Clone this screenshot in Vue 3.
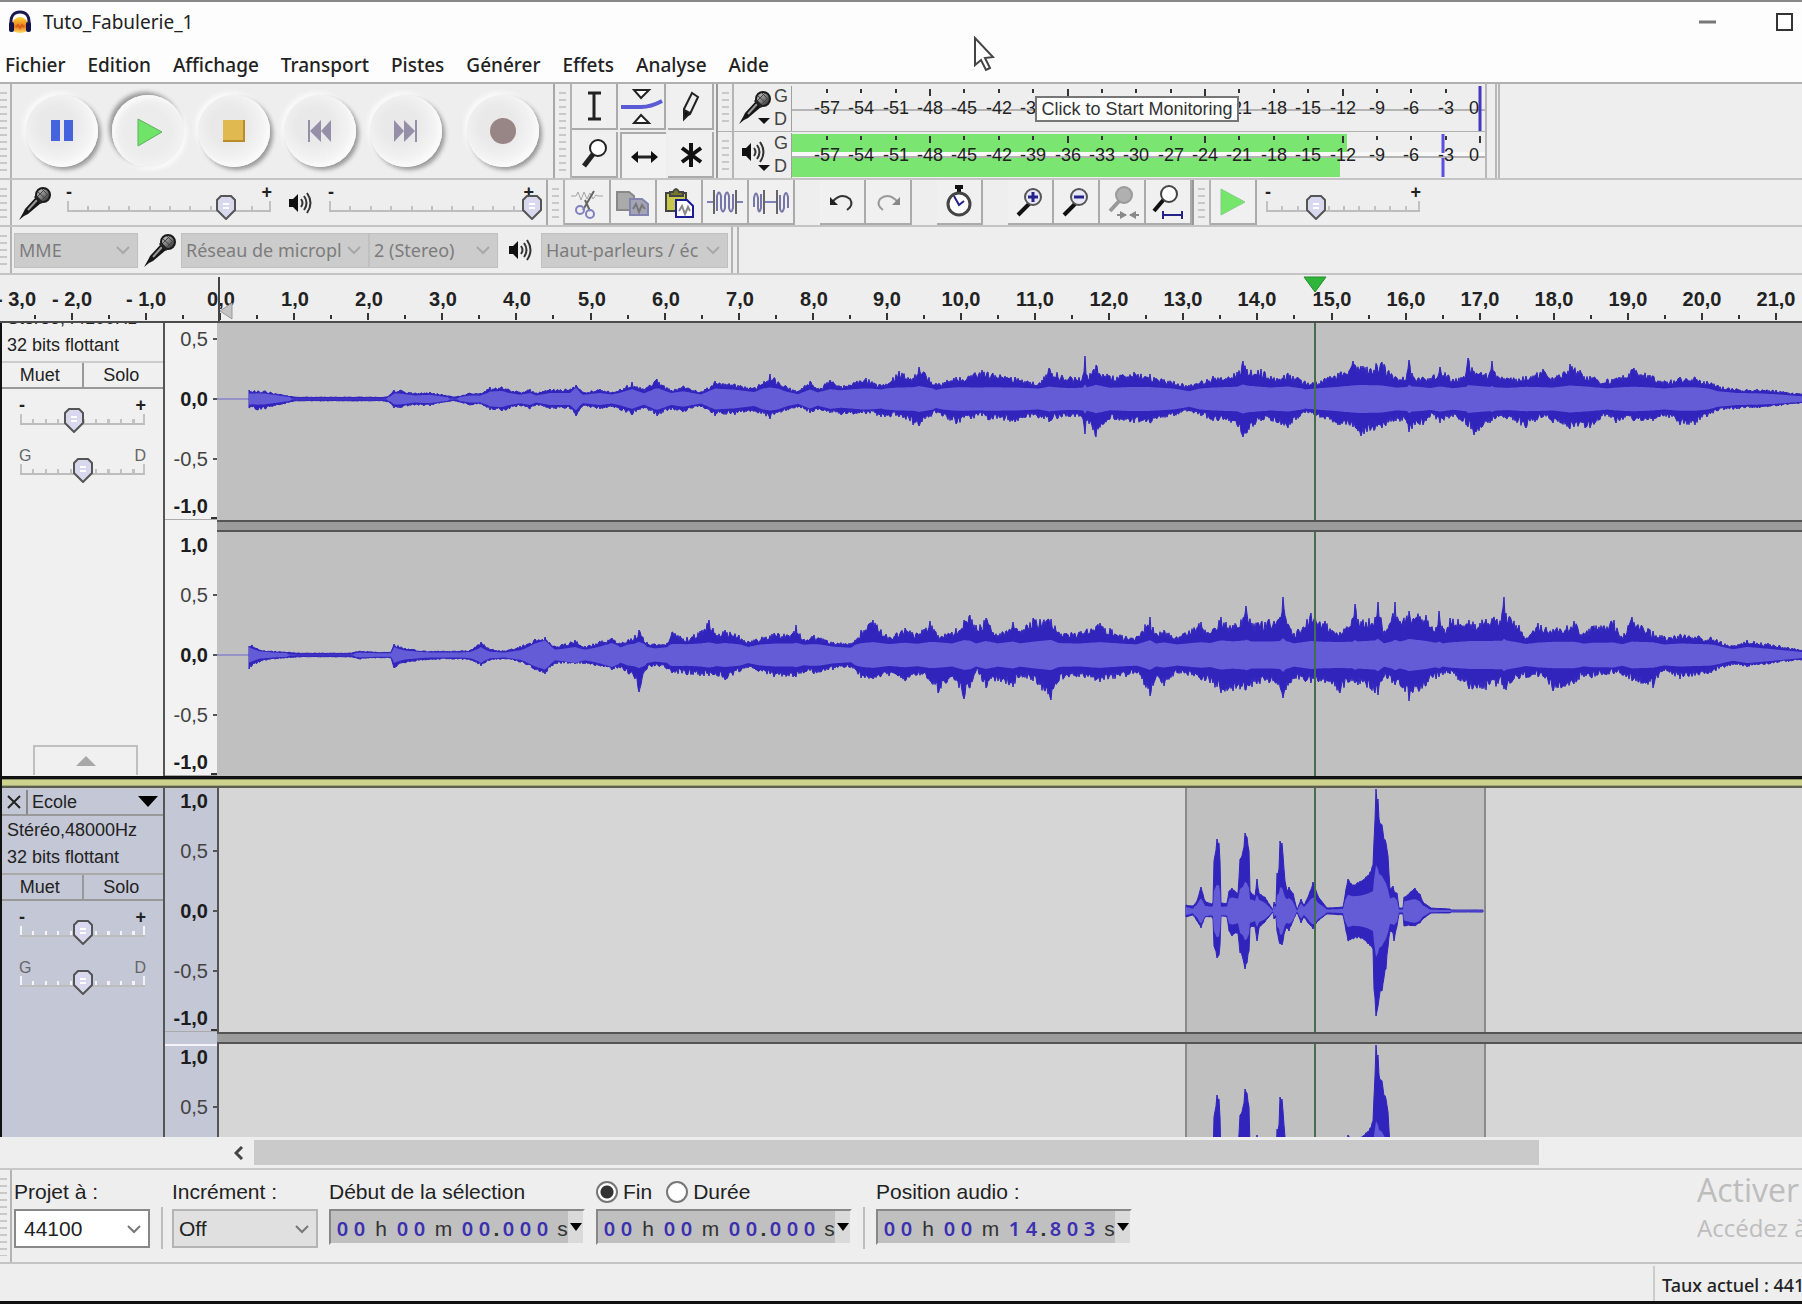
<script setup>
import { ref } from 'vue'

const menus = ['Fichier', 'Edition', 'Affichage', 'Transport', 'Pistes', 'Générer', 'Effets', 'Analyse', 'Aide']

const transport = [
  { id: 'pause', label: 'Pause' },
  { id: 'play', label: 'Lecture', pressed: true },
  { id: 'stop', label: 'Arrêt' },
  { id: 'start', label: 'Début' },
  { id: 'end', label: 'Fin' },
  { id: 'record', label: 'Enregistrer' },
]

const tools = [
  { id: 'select', label: 'Sélection' },
  { id: 'envelope', label: 'Enveloppe' },
  { id: 'draw', label: 'Retouche' },
  { id: 'zoom', label: 'Zoom' },
  { id: 'shift', label: 'Glissement temporel', pressed: true },
  { id: 'multi', label: 'Multi-outils' },
]

const editGroups = [
  [
    { id: 'cut', label: 'Couper' },
    { id: 'copy', label: 'Copier' },
    { id: 'paste', label: 'Coller' },
    { id: 'trim', label: 'Rogner' },
    { id: 'silence', label: 'Silence' },
  ],
  [
    { id: 'undo', label: 'Annuler' },
    { id: 'redo', label: 'Rétablir' },
  ],
  [{ id: 'clock', label: 'Sync-Lock' }],
  [
    { id: 'zoomin', label: 'Zoom avant' },
    { id: 'zoomout', label: 'Zoom arrière' },
    { id: 'fitsel', label: 'Ajuster la sélection' },
    { id: 'fitproj', label: 'Ajuster le projet' },
  ],
]

// Level meters: one mark every 3 dB
const marks = Array.from({ length: 20 }, (_, i) => {
  const db = -57 + i * 3
  return { db, x: Math.round(36 + (i * 653) / 19), major: db % 12 === 0 }
})

// Time ruler: as many seconds as the window can show
const PX_PER_SEC = 74.1
const ORIGIN = 220
const lastSecond = Math.floor((window.innerWidth - ORIGIN) / PX_PER_SEC)
const at = (s) => Math.round(ORIGIN + s * PX_PER_SEC)
const ticks = []
for (let s = -2.5; s <= lastSecond; s += 0.5) {
  ticks.push({ x: at(s), major: Number.isInteger(s) })
}
const rulerLabels = []
for (let s = -2; s <= lastSecond; s++) {
  rulerLabels.push({ x: at(s) + (s >= 0 && s < 9 ? 1 : 0), text: (s < 0 ? '- ' : '') + Math.abs(s) + ',0' })
}

// Peak envelopes as [x, up, down] triples
const envA = [
  249, 9, 9, 258, 8, 11, 265, 8, 10, 280, 5, 6, 295, 2, 2, 385, 2, 2, 390, 4, 4, 394, 9, 9, 400, 9, 9, 415, 6, 6, 430, 7, 7, 445, 4, 3, 455, 2, 2,
  470, 6, 6, 480, 6, 5, 490, 12, 11, 502, 12, 12, 520, 7, 7, 530, 10, 10, 536, 6, 6, 550, 10, 10, 570, 10, 10, 576, 14, 17, 583, 7, 7,
  600, 10, 10, 612, 7, 8, 620, 10, 11, 632, 17, 16, 644, 10, 9, 657, 20, 17, 671, 9, 11, 683, 13, 13, 701, 7, 8, 715, 18, 17,
  735, 15, 16, 754, 11, 12, 770, 25, 20, 786, 13, 12, 798, 8, 8, 810, 18, 14, 818, 11, 11, 830, 19, 14, 841, 13, 16, 866, 21, 15,
  881, 14, 18, 899, 28, 18, 913, 21, 26, 919, 32, 27, 936, 16, 14, 956, 22, 25, 982, 29, 17, 988, 27, 21, 1015, 22, 23,
  1039, 16, 19, 1049, 31, 23, 1062, 24, 18, 1075, 22, 18, 1083, 24, 20, 1085, 43, 35, 1087, 24, 22, 1096, 34, 38, 1110, 23, 20,
  1134, 27, 24, 1150, 25, 24, 1174, 18, 17, 1189, 14, 12, 1213, 23, 22, 1237, 27, 26, 1243, 38, 38, 1247, 30, 34, 1261, 30, 22,
  1271, 23, 22, 1288, 26, 29, 1305, 18, 14, 1315, 18, 17, 1338, 26, 26, 1353, 38, 28, 1361, 33, 37, 1382, 37, 29, 1396, 22, 22,
  1407, 26, 24, 1409, 39, 33, 1412, 26, 30, 1423, 22, 26, 1430, 21, 18, 1440, 32, 24, 1453, 20, 18, 1466, 26, 26, 1468, 41, 28,
  1474, 28, 36, 1490, 27, 24, 1492, 38, 22, 1495, 27, 20, 1507, 21, 20, 1526, 23, 29, 1543, 30, 18, 1553, 21, 24, 1570, 35, 30,
  1590, 23, 29, 1607, 20, 16, 1616, 21, 24, 1634, 31, 22, 1653, 23, 22, 1664, 18, 17, 1680, 22, 26, 1695, 22, 26, 1707, 18, 18,
  1718, 14, 12, 1737, 10, 10, 1757, 10, 9, 1776, 9, 7, 1802, 5, 4, 1960, 2, 2,
]
const envB = [
  249, 9, 14, 252, 10, 11, 260, 5, 7, 275, 4, 4, 299, 2, 2, 350, 2, 2, 360, 4, 4, 375, 3, 3, 391, 3, 3, 394, 11, 13, 405, 7, 8,
  425, 4, 5, 455, 4, 4, 470, 5, 5, 481, 13, 11, 490, 6, 5, 505, 4, 4, 520, 9, 7, 535, 16, 15, 545, 18, 19, 555, 9, 9, 575, 15, 9,
  585, 9, 9, 600, 14, 11, 612, 17, 15, 620, 12, 13, 635, 20, 24, 639, 25, 37, 647, 13, 14, 655, 11, 11, 667, 12, 14, 672, 23, 18,
  687, 18, 20, 700, 24, 21, 709, 35, 21, 717, 20, 21, 725, 25, 25, 739, 20, 17, 748, 14, 13, 774, 22, 22, 793, 22, 22, 796, 30, 22,
  804, 16, 18, 814, 20, 19, 833, 13, 15, 851, 12, 12, 861, 25, 23, 873, 35, 24, 889, 18, 21, 905, 27, 26, 917, 22, 20, 930, 34, 26,
  938, 20, 38, 952, 23, 22, 964, 35, 44, 970, 40, 33, 976, 30, 16, 986, 37, 33, 998, 20, 26, 1013, 33, 32, 1020, 24, 22,
  1033, 37, 26, 1051, 36, 45, 1059, 23, 26, 1079, 23, 22, 1100, 32, 27, 1126, 19, 22, 1137, 19, 18, 1150, 38, 41, 1156, 22, 22,
  1164, 25, 31, 1177, 18, 18, 1201, 33, 25, 1210, 22, 28, 1221, 38, 38, 1233, 30, 36, 1245, 41, 35, 1246, 49, 35, 1252, 32, 32,
  1269, 36, 28, 1280, 38, 32, 1283, 58, 43, 1286, 36, 35, 1294, 22, 24, 1311, 42, 28, 1325, 34, 28, 1340, 23, 38, 1352, 36, 26,
  1355, 51, 28, 1358, 36, 30, 1375, 38, 38, 1378, 53, 40, 1384, 24, 22, 1392, 38, 28, 1395, 53, 30, 1400, 34, 30, 1409, 44, 46,
  1426, 40, 31, 1436, 28, 24, 1439, 44, 22, 1443, 26, 20, 1450, 37, 19, 1469, 35, 34, 1486, 36, 35, 1502, 42, 30, 1504, 58, 34,
  1506, 42, 35, 1519, 30, 24, 1526, 17, 23, 1538, 32, 22, 1553, 26, 36, 1574, 34, 29, 1584, 22, 22, 1592, 29, 23, 1614, 35, 19,
  1622, 18, 20, 1632, 38, 26, 1653, 24, 33, 1664, 19, 16, 1680, 21, 24, 1711, 18, 18, 1733, 9, 10, 1747, 15, 12, 1768, 12, 9,
  1802, 5, 5, 1960, 2, 2,
]
const envC = [
  1186, 6, 6, 1193, 5, 4, 1197, 10, 10, 1201, 24, 17, 1205, 10, 6, 1212, 7, 6, 1213, 9, 8, 1214, 50, 35, 1217, 72, 47, 1219, 68, 44,
  1220, 50, 34, 1221, 8, 5, 1227, 8, 6, 1229, 20, 20, 1232, 23, 25, 1238, 18, 22, 1240, 52, 42, 1243, 60, 48, 1245, 78, 58,
  1247, 74, 52, 1249, 60, 40, 1250, 20, 17, 1255, 15, 16, 1257, 32, 30, 1259, 18, 17, 1265, 14, 11, 1273, 1, 1, 1274, 9, 8,
  1276, 6, 6, 1277, 38, 20, 1279, 42, 30, 1280, 70, 33, 1282, 68, 34, 1283, 56, 30, 1285, 30, 20, 1287, 20, 17, 1289, 24, 20,
  1293, 18, 10, 1297, 1, 1, 1301, 12, 12, 1304, 6, 6, 1308, 14, 12, 1313, 29, 18, 1318, 15, 10, 1327, 3, 3, 1343, 4, 4,
  1346, 22, 20, 1348, 32, 30, 1353, 26, 28, 1360, 30, 27, 1368, 36, 33, 1373, 46, 38, 1374, 70, 78, 1376, 122, 105, 1378, 112, 95,
  1379, 92, 88, 1382, 86, 80, 1386, 68, 58, 1388, 55, 36, 1390, 22, 20, 1393, 25, 22, 1394, 20, 30, 1397, 18, 15, 1399, 3, 3,
  1403, 3, 3, 1404, 14, 15, 1415, 23, 15, 1420, 17, 12, 1423, 9, 8, 1431, 3, 2, 1450, 2, 2, 1451, 1, 1, 1484, 1, 1,
]

const LEFT = 217

function trace(env, seed, rms, noise) {
  let state = seed
  const rand = () => {
    state = (state * 1103515245 + 12345) % 2147483648
    return state / 2147483648
  }
  const peaksUp = []
  const peaksDown = []
  const rmsUp = []
  const rmsDown = []
  for (let i = 0; i + 5 < env.length; i += 3) {
    const [x0, u0, d0, x1, u1, d1] = env.slice(i, i + 6)
    for (let x = x0; x < x1; x++) {
      const t = (x - x0) / (x1 - x0)
      const u = u0 + (u1 - u0) * t
      const d = d0 + (d1 - d0) * t
      const fu = x === x0 ? 1 : 1 - noise * rand()
      const fd = x === x0 ? 1 : 1 - noise * rand()
      const px = x - LEFT
      peaksUp.push(`${px} ${(-u * fu).toFixed(1)}`)
      peaksDown.push(`${px} ${(d * fd).toFixed(1)}`)
      const core = rms((u + d) / 2, x)
      rmsUp.push(`${px} ${(-core).toFixed(1)}`)
      rmsDown.push(`${px} ${core.toFixed(1)}`)
    }
  }
  const close = (a, b) => `M${a.join('L')}L${b.reverse().join('L')}Z`
  return { peaks: close(peaksUp, peaksDown), core: close(rmsUp, rmsDown) }
}

const musicCore = (a, x) => (x < 620 ? Math.max(a * 0.6, a - 4) - (a < 3 ? 1 : 0) : Math.min(a * 0.6, 7 + a * 0.2))
const waveA = trace(envA, 7, musicCore, 0.3)
const waveB = trace(envB, 23, musicCore, 0.3)
const waveC = trace(envC, 5, (a) => (a < 5 ? a * 0.5 : Math.min(a * 0.65, 5 + a * 0.36)), 0.08)

const tracks = [
  {
    id: 1,
    name: 'Musique',
    rate: 'Stéréo,44100Hz',
    gain: 43,
    pan: 50,
    selected: false,
    channels: [waveA, waveB],
  },
  {
    id: 2,
    name: 'Ecole',
    rate: 'Stéréo,48000Hz',
    gain: 50,
    pan: 50,
    selected: true,
    clip: { x: 968, width: 299 },
    channels: [waveC, waveC],
  },
]
const levels = ['1,0', '0,5', '0,0', '-0,5', '-1,0']

const cells = (sec) => [...'00h00m' + sec + 's'].map((c) => ({ c, kind: c === '.' ? 'dot' : /\d/.test(c) ? 'digit' : c }))
const startTime = cells('00.000')
const endTime = cells('00.000')
const audioTime = cells('14.803')

const recLevel = ref(78)
const playLevel = ref(100)
const speed = ref(32)
const mode = ref('fin')
</script>

<template>
  <div class="app">
    <svg class="defs" aria-hidden="true">
      <defs>
        <linearGradient id="gMic" x1="0" y1="0" x2="1" y2="1">
          <stop offset="0" stop-color="#ddd" />
          <stop offset="1" stop-color="#222" />
        </linearGradient>
        <linearGradient id="gLogo" x1="0" y1="0" x2="0" y2="1">
          <stop offset="0" stop-color="#ffd83a" />
          <stop offset="0.6" stop-color="#e8761a" />
          <stop offset="1" stop-color="#ffe066" />
        </linearGradient>
        <symbol id="mic" viewBox="0 0 34 34">
          <path d="M18 11L23 17L10 28L6 30L1 34L5 27L7 23Z" fill="#161616" />
          <path d="M19 14L10 24" stroke="#999" stroke-width="2" />
          <circle cx="25" cy="9" r="7" fill="url(#gMic)" stroke="#1a1a1a" stroke-width="2" />
          <path d="M20 6L29 14M24 3L31 10M19 11L27 3M23 15L31 7" stroke="#444" stroke-width="1" />
          <path d="M17 10L24 17" stroke="#222" stroke-width="3" />
        </symbol>
        <symbol id="speaker" viewBox="0 0 24 24">
          <path d="M1 8H5L10 3V21L5 16H1Z" fill="#111" />
          <path d="M13 8Q16 12 13 16M16 5Q21 12 16 19M19 2Q26 12 19 22" fill="none" stroke="#333" stroke-width="2" />
        </symbol>
        <symbol id="chevron" viewBox="0 0 16 10">
          <path d="M2 2L8 8L14 2" fill="none" stroke="currentColor" stroke-width="2" />
        </symbol>
      </defs>
    </svg>

    <header class="top">
      <div class="titlebar">
        <svg class="logo" viewBox="0 0 24 24" aria-hidden="true">
          <path d="M5 11Q12 3 19 11V21Q12 25 5 21Z" fill="url(#gLogo)" />
          <path d="M8 17L10 15L12 18L14 15L16 17" stroke="#d86018" fill="none" stroke-width="2" />
          <path d="M3 15Q2 2 12 2T21 15" fill="none" stroke="#1a1a50" stroke-width="3" />
          <rect x="1" y="12" width="5" height="10" rx="2" fill="#14144a" />
          <rect x="18" y="12" width="5" height="10" rx="2" fill="#14144a" />
        </svg>
        <h1>Tuto_Fabulerie_1</h1>
        <div class="winbtns">
          <button type="button" aria-label="Réduire"><svg width="18" height="20"><path d="M0 10H17" stroke="#777" stroke-width="3" /></svg></button>
          <button type="button" aria-label="Agrandir"><svg width="19" height="20"><rect x="2" y="2" width="15" height="16" fill="none" stroke="#333" stroke-width="2" /></svg></button>
        </div>
      </div>
      <nav class="menubar">
        <a v-for="m in menus" :key="m" href="#">{{ m }}</a>
      </nav>
      <svg class="pointer" viewBox="0 0 22 36" aria-hidden="true">
        <path d="M2 2V29L8 24L13 34L17 32L12 22L20 21Z" fill="#fff" stroke="#444" stroke-width="2" />
      </svg>
    </header>

    <div class="row row-main">
      <section class="bar transport">
        <span class="grip"></span>
        <div class="round-set">
          <button v-for="b in transport" :key="b.id" type="button" class="round" :class="[b.id, { pressed: b.pressed }]" :aria-label="b.label">
            <svg viewBox="0 0 32 32" width="32" height="32">
              <g v-if="b.id === 'pause'" fill="#4463dc"><rect x="5" y="5" width="9" height="21" /><rect x="18" y="5" width="9" height="21" /></g>
              <path v-else-if="b.id === 'play'" d="M6 4L30 17L6 31Z" fill="#70e468" stroke="#5fae5c" />
              <g v-else-if="b.id === 'stop'"><rect x="5" y="5" width="22" height="22" fill="#e0ba50" /><path d="M5 26H26V5" stroke="#b88c2c" stroke-width="2" fill="none" /></g>
              <path v-else-if="b.id === 'start'" d="M4 5H6V27H4ZM17 5V27L6 16ZM27 5V27L17 16Z" fill="#958fa8" />
              <path v-else-if="b.id === 'end'" d="M27 5H25V27H27ZM14 5V27L25 16ZM4 5V27L14 16Z" fill="#958fa8" />
              <circle v-else cx="16" cy="16" r="13" fill="#988585" />
            </svg>
          </button>
        </div>
      </section>

      <section class="bar tools">
        <span class="grip"></span>
        <div class="tool-grid">
          <button v-for="t in tools" :key="t.id" type="button" class="sq" :class="{ pressed: t.pressed }" :aria-label="t.label">
            <svg viewBox="0 0 42 42" width="42" height="42" fill="none" stroke="#222" stroke-width="2">
              <path v-if="t.id === 'select'" d="M15 8H28M15 34H28M21 8V34" stroke-width="3" />
              <g v-else-if="t.id === 'envelope'">
                <path d="M0 22H20Q30 22 41 16" stroke="#5b5bd6" stroke-width="4" />
                <path d="M13 5H28L20 13ZM13 38H28L20 30Z" fill="#fff" />
              </g>
              <g v-else-if="t.id === 'draw'">
                <path d="M15 24L23 8L29 12L21 29L15 32Z" fill="#eee" />
                <path d="M15 25L21 28L15 34Z" fill="#111" />
              </g>
              <g v-else-if="t.id === 'zoom'">
                <path d="M21 20L11 33" stroke-width="5" />
                <circle cx="25" cy="15" r="8" fill="#fff" />
              </g>
              <g v-else-if="t.id === 'shift'">
                <path d="M12 22H30" stroke-width="3" />
                <path d="M8 22L15 16V28ZM35 22L28 16V28Z" fill="#111" stroke="none" />
              </g>
              <path v-else d="M22 10V34M13 15L32 29M32 15L13 29" stroke-width="4" stroke="#111" />
            </svg>
          </button>
        </div>
      </section>

      <section class="meters">
        <div v-for="kind in ['rec', 'play']" :key="kind" class="meter" :class="kind">
          <span class="grip"></span>
          <button type="button" class="meter-btn" :aria-label="kind === 'rec' ? 'Niveau d’entrée' : 'Niveau de sortie'">
            <svg width="38" height="38" viewBox="0 0 38 38">
              <use v-if="kind === 'rec'" href="#mic" x="2" y="1" width="34" height="34" />
              <use v-else href="#speaker" x="5" y="4" width="24" height="24" />
              <path d="M22 29H34L28 35Z" fill="#111" />
            </svg>
          </button>
          <div class="lr"><span>G</span><span>D</span></div>
          <div class="scale-box">
            <svg class="scale" width="694" height="46" role="img" aria-label="Niveau en dB">
              <g v-if="kind === 'play'">
                <rect x="0" y="2" width="556" height="19" fill="#7ae671" />
                <rect x="0" y="26" width="549" height="19" fill="#7ae671" />
                <path d="M0 22H694" stroke="#f8f8f8" stroke-width="4" />
                <path d="M652 2V21M652 26V45" stroke="#5a4fe0" stroke-width="3" />
              </g>
              <path d="M0 25H694" stroke="#b4b4b4" stroke-width="2" />
              <path d="M0 1V46" stroke="#a0a0a0" stroke-width="2" />
              <path v-for="m in marks" :key="m.db" :d="`M${m.x} 4v${m.major ? 7 : 4}`" stroke="#333" stroke-width="2" />
              <path v-if="kind === 'rec'" d="M689 1V46" stroke="#4438c0" stroke-width="3" />
              <text v-for="m in marks" :key="'t' + m.db" :x="m.db ? m.x : m.x - 6" y="29" text-anchor="middle">{{ m.db }}</text>
            </svg>
            <span v-if="kind === 'rec'" class="tip">Click to Start Monitoring</span>
          </div>
        </div>
      </section>
      <span class="end-lines"></span>
    </div>

    <div class="row row-edit">
      <section class="bar mixer">
        <span class="grip"></span>
        <svg class="mic"><use href="#mic" /></svg>
        <div class="slider-box wide">
          <div class="signs"><span>-</span><span>+</span></div>
          <div class="slider"><span class="rail"></span><input v-model="recLevel" type="range" min="0" max="100" aria-label="Volume d'enregistrement" /></div>
        </div>
        <svg class="spk"><use href="#speaker" /></svg>
        <div class="slider-box wide">
          <div class="signs"><span>-</span><span>+</span></div>
          <div class="slider"><span class="rail"></span><input v-model="playLevel" type="range" min="0" max="100" aria-label="Volume de lecture" /></div>
        </div>
      </section>
      <section class="bar edit">
        <span class="grip"></span>
        <div v-for="(g, i) in editGroups" :key="i" class="group">
          <button v-for="b in g" :key="b.id" type="button" class="sq" :aria-label="b.label">
            <svg viewBox="0 0 42 42" width="42" height="42" fill="none" stroke="#777" stroke-width="2">
              <g v-if="b.id === 'cut'">
                <path d="M5 15H10L12 11L15 19L18 11L21 18L24 12L27 18L30 14L32 15H37" stroke="#a4a4a4" stroke-width="1" />
                <path d="M28 10L17 29M19 19L24 30" stroke="#666" />
                <circle cx="14" cy="29" r="4" stroke="#8080c0" /><circle cx="24" cy="33" r="4" stroke="#8080c0" />
              </g>
              <g v-else-if="b.id === 'copy'" fill="#aaa">
                <path d="M5 11H17L22 15V29H5Z" stroke="#888" /><path d="M18 18H30L36 23V34H18Z" fill="#a4a4b4" stroke="#8484b0" />
                <path d="M21 28L24 23L27 31L30 24L33 28" fill="none" stroke="#777" />
              </g>
              <g v-else-if="b.id === 'paste'">
                <path d="M8 12H28V30H8Z" fill="#c6c84c" stroke="#444" /><path d="M12 15V11H15Q18 5 21 11H25V15Z" fill="#77772a" stroke="#444" />
                <path d="M18 19H29L35 25V36H18Z" fill="#fff" stroke="#1c1c96" />
                <path d="M21 30L24 25L27 33L30 26L32 30" stroke="#888" />
              </g>
              <g v-else-if="b.id === 'trim'">
                <path d="M3 21H10M32 21H39" stroke="#8080b8" /><path d="M10 9V33M32 9V33" stroke="#666" />
                <path d="M13 30V15Q15 8 17 15V27Q19 34 21 27V15Q23 8 25 15V27Q27 34 29 27V13" stroke="#7676a8" />
              </g>
              <g v-else-if="b.id === 'silence'">
                <path d="M14 21H27" stroke="#8080b8" /><path d="M14 9V33M27 9V33" stroke="#666" />
                <path d="M4 26V17Q6 8 8 17V27Q9 34 11 27V13M30 14V28Q32 34 34 27V16Q36 8 38 16V27" stroke="#7676a8" />
              </g>
              <g v-else-if="b.id === 'undo'" stroke="#333"><path d="M12 20Q21 11 29 18Q33 24 26 29" /><path d="M9 16V24H17Z" fill="#222" stroke="none" /></g>
              <g v-else-if="b.id === 'redo'" stroke="#999"><path d="M30 20Q21 11 13 18Q9 24 16 29" /><path d="M33 16V24H25Z" fill="#888" stroke="none" /></g>
              <g v-else-if="b.id === 'clock'" stroke="#444">
                <path d="M17 6H25M21 6V12" stroke="#111" stroke-width="4" /><circle cx="21" cy="23" r="11" fill="#fff" stroke-width="3" />
                <path d="M16 15L21 24L26 20" stroke="#22228a" />
              </g>
              <g v-else-if="b.id === 'fitsel'">
                <path d="M20 18L9 30" stroke-width="4" stroke="#999" /><circle cx="23" cy="14" r="8" fill="#b0b0b0" stroke="#999" />
                <path d="M16 34H25M29 34H38" stroke="#888" /><path d="M19 30L26 34L19 38ZM35 30L28 34L35 38Z" fill="#888" stroke="none" />
              </g>
              <g v-else-if="b.id === 'fitproj'">
                <path d="M18 17L7 30" stroke-width="4" stroke="#111" /><circle cx="22" cy="13" r="8" fill="#fff" stroke="#444" />
                <path d="M16 30V38M35 30V38M16 34H35" stroke="#22228a" />
              </g>
              <g v-else>
                <path d="M21 22L9 34" stroke-width="4" stroke="#111" /><circle cx="24" cy="16" r="8" fill="#e8e8f4" stroke="#555" />
                <path :d="b.id === 'zoomin' ? 'M19 16H29M24 11V21' : 'M19 16H29'" stroke="#22228a" stroke-width="3" />
              </g>
            </svg>
          </button>
        </div>
      </section>
      <section class="bar speed">
        <span class="grip"></span>
        <button type="button" class="sq" aria-label="Lecture à vitesse réglée">
          <svg viewBox="0 0 42 42" width="42" height="42"><path d="M9 8L33 21L9 34Z" fill="#74e66c" stroke="#8c8" /></svg>
        </button>
        <div class="slider-box short">
          <div class="signs"><span>-</span><span>+</span></div>
          <div class="slider"><span class="rail"></span><input v-model="speed" type="range" min="0" max="100" aria-label="Vitesse de lecture" /></div>
        </div>
      </section>
    </div>

    <div class="row row-device">
      <section class="bar device">
        <span class="grip"></span>
        <label class="combo dim host"><select disabled aria-label="Hôte audio"><option>MME</option></select><svg><use href="#chevron" /></svg></label>
        <svg class="mic"><use href="#mic" /></svg>
        <label class="combo dim input"><select disabled aria-label="Périphérique d'entrée"><option>Réseau de micropl</option></select><svg><use href="#chevron" /></svg></label>
        <label class="combo dim chans"><select disabled aria-label="Canaux"><option>2 (Stereo)</option></select><svg><use href="#chevron" /></svg></label>
        <svg class="spk"><use href="#speaker" /></svg>
        <label class="combo dim output"><select disabled aria-label="Périphérique de sortie"><option>Haut-parleurs / éc</option></select><svg><use href="#chevron" /></svg></label>
      </section>
      <span class="end-line"></span>
    </div>

    <div class="ruler">
      <svg width="100%" height="46">
        <path v-for="t in ticks" :key="t.x" :d="t.major ? `M${t.x} 38v7` : `M${t.x} 40v4`" stroke="#333" stroke-width="2" />
        <text x="16" y="31" text-anchor="middle">- 3,0</text>
        <text v-for="l in rulerLabels" :key="l.text" :x="l.x" y="31" text-anchor="middle">{{ l.text }}</text>
        <path d="M220 36L232 28V44Z" fill="#c4c4c4" stroke="#999" />
        <path d="M219 2V46" stroke="#444" stroke-width="2" />
        <path d="M1304 2H1326L1315 17Z" fill="#2fb53a" stroke="#238c2c" />
      </svg>
    </div>

    <main class="tracks">
      <template v-for="(t, k) in tracks" :key="t.id">
        <div v-if="k" class="band"></div>
        <article class="track" :class="{ selected: t.selected }">
          <aside class="panel">
            <div class="head">
              <button type="button" class="close" aria-label="Fermer la piste"><svg width="16" height="16"><path d="M2 2L14 14M14 2L2 14" stroke="#222" stroke-width="2" /></svg></button>
              <button type="button" class="name">{{ t.name }}<svg width="20" height="12"><path d="M0 0H20L10 11Z" fill="#000" /></svg></button>
            </div>
            <p>{{ t.rate }}</p>
            <p>32 bits flottant</p>
            <div class="mute"><button type="button">Muet</button><button type="button">Solo</button></div>
            <div class="slider-box">
              <div class="signs"><span>-</span><span>+</span></div>
              <div class="slider"><span class="rail"></span><input type="range" min="0" max="100" :value="t.gain" aria-label="Gain" /></div>
            </div>
            <div class="slider-box">
              <div class="signs lrs"><span>G</span><span>D</span></div>
              <div class="slider"><span class="rail"></span><input type="range" min="0" max="100" :value="t.pan" aria-label="Balance" /></div>
            </div>
            <button type="button" class="fold" aria-label="Replier la piste"><svg width="20" height="12"><path d="M0 11L10 1L20 11Z" fill="#a8a8a8" /></svg></button>
          </aside>
          <div class="channels">
            <div v-for="(w, i) in t.channels" :key="i" class="channel">
              <div class="vruler">
                <span v-for="(l, n) in levels" :key="l" :class="{ strong: n % 2 === 0 }">{{ l }}</span>
              </div>
              <svg class="wave" height="244">
                <rect v-if="t.clip" :x="t.clip.x + 1" y="-2" :width="t.clip.width" height="250" fill="#c0c0c0" stroke="#8a8a8a" stroke-width="2" />
                <path v-if="!t.clip" d="M0 123H32" stroke="#6a64d0" stroke-width="1" />
                <g transform="translate(0 123)">
                  <path :d="w.peaks" fill="#3024bd" stroke="#3024bd" stroke-width="1" />
                  <path :d="w.core" fill="#635cd6" />
                </g>
                <path d="M1098 0V244" stroke="#456f4c" stroke-width="2" />
              </svg>
            </div>
          </div>
        </article>
      </template>
    </main>

    <div class="hscroll">
      <button type="button" aria-label="Défiler à gauche"><svg width="10" height="14"><path d="M8 1L2 7L8 13" fill="none" stroke="#444" stroke-width="3" /></svg></button>
      <div class="lane"><span class="thumb"></span></div>
    </div>

    <section class="selection">
      <span class="grip"></span>
      <div class="field rate">
        <label for="rate">Projet à :</label>
        <span class="combo white"><select id="rate"><option>44100</option></select><svg><use href="#chevron" /></svg></span>
      </div>
      <span class="sep"></span>
      <div class="field snap">
        <label for="snap">Incrément :</label>
        <span class="combo"><select id="snap"><option>Off</option></select><svg><use href="#chevron" /></svg></span>
      </div>
      <div class="field time">
        <span class="caption">Début de la sélection</span>
        <div class="clock" role="group" aria-label="Début de la sélection">
          <span v-for="(c, i) in startTime" :key="i" :class="c.kind">{{ c.c }}</span>
          <button type="button" aria-label="Format"><svg width="12" height="8"><path d="M0 0H12L6 8Z" /></svg></button>
        </div>
      </div>
      <div class="field time">
        <span class="caption radios">
          <label><input v-model="mode" type="radio" name="mode" value="fin" />Fin</label>
          <label><input v-model="mode" type="radio" name="mode" value="duree" />Durée</label>
        </span>
        <div class="clock" role="group" aria-label="Fin de la sélection">
          <span v-for="(c, i) in endTime" :key="i" :class="c.kind">{{ c.c }}</span>
          <button type="button" aria-label="Format"><svg width="12" height="8"><path d="M0 0H12L6 8Z" /></svg></button>
        </div>
      </div>
      <span class="sep"></span>
      <div class="field time">
        <span class="caption">Position audio :</span>
        <div class="clock" role="group" aria-label="Position audio">
          <span v-for="(c, i) in audioTime" :key="i" :class="c.kind">{{ c.c }}</span>
          <button type="button" aria-label="Format"><svg width="12" height="8"><path d="M0 0H12L6 8Z" /></svg></button>
        </div>
      </div>
      <div class="watermark"><strong>Activer</strong><span>Accédez à</span></div>
    </section>

    <footer class="status"><span>Taux actuel : 44100</span></footer>
  </div>
</template>

<style>
body {
  margin: 0;
  overflow: hidden;
}
</style>

<style scoped>
* {
  box-sizing: border-box;
}
.app {
  display: flex;
  flex-direction: column;
  height: 100vh;
  overflow: hidden;
  background: #eeeeee;
  color: #222;
  font-family: "Liberation Sans", Arial, sans-serif;
  font-size: 18px;
}
button {
  margin: 0;
  padding: 0;
  border: 0;
  background: none;
  color: inherit;
  font: inherit;
}
svg {
  display: block;
  flex: none;
}
.defs {
  position: absolute;
  width: 0;
  height: 0;
}

/* title and menus */
.top {
  position: relative;
  flex: none;
  background: #fdfdfd;
  border-top: 2px solid #888;
  border-bottom: 2px solid #b0b0b0;
  font-family: "Noto Sans", "Open Sans", sans-serif;
  font-size: 19px;
  font-weight: 500;
}
.titlebar {
  display: flex;
  align-items: center;
  height: 40px;
  padding: 0 8px;
}
.logo {
  width: 24px;
  height: 24px;
}
h1 {
  margin: 0 0 0 11px;
  font-size: 19px;
  font-weight: 400;
}
.winbtns {
  display: flex;
  gap: 58px;
  margin-left: auto;
}
.menubar {
  display: flex;
  gap: 22px;
  height: 40px;
  padding-left: 5px;
  line-height: 46px;
}
.menubar a {
  color: #222;
  text-decoration: none;
}
.pointer {
  position: absolute;
  top: 34px;
  left: 54%;
  width: 22px;
  height: 36px;
}

/* toolbars */
.row {
  display: flex;
  flex: none;
  border-bottom: 2px solid #c4c4c4;
}
.row-main {
  height: 96px;
}
.row-edit {
  height: 47px;
}
.row-device {
  height: 48px;
}
.bar {
  display: flex;
  align-items: center;
}
.grip {
  align-self: stretch;
  flex: none;
  width: 17px;
  border-right: 2px solid #b4b4b4;
  background: repeating-linear-gradient(#c8c8c8 0 2px, transparent 2px 7px) 4px 8px / 7px calc(100% - 14px) no-repeat;
}
.bar:first-child > .grip,
.selection > .grip {
  width: 12px;
  background-position: 0 8px;
}
.transport {
  width: 555px;
  border-right: 2px solid #a8a8a8;
}
.round-set {
  display: flex;
  gap: 14px;
  padding-left: 14px;
}
.round {
  display: grid;
  place-items: center;
  width: 72px;
  height: 72px;
  border-radius: 50%;
  background: radial-gradient(circle at 42% 42%, #e9e9e9 30%, #f6f6f6 68%);
  box-shadow: 3px 3px 4px #999, -3px -3px 4px #fafafa, inset -3px -3px 4px #fafafa;
}
.round.pressed {
  background: radial-gradient(circle, #ececec 45%, #f2f2f2 70%);
  box-shadow: -3px -3px 4px #999, 3px 3px 4px #fafafa, inset 3px 3px 4px #fafafa;
}
.round.record {
  margin-left: 11px;
}
.tools {
  border-right: 2px solid #999;
}
.tool-grid {
  display: grid;
  grid-template-columns: repeat(3, 48px);
  gap: 2px 0;
}
.sq {
  display: grid;
  place-items: center;
  width: 46px;
  height: 46px;
  border-right: 2px solid #aaa;
  border-bottom: 2px solid #aaa;
  background: #f0f0f0;
}
.sq.pressed {
  border: 0 solid #aaa;
  border-width: 2px 0 0 2px;
  background: #f2f2f2;
}
.row-edit .sq {
  height: 45px;
}
.meters {
  display: flex;
  flex-direction: column;
}
.meters .grip {
  width: 16px;
}
.meter {
  display: flex;
  align-items: center;
  height: 47px;
}
.meter + .meter {
  border-top: 1px solid #b0b0b0;
}
.meter-btn {
  width: 38px;
  margin-left: 2px;
}
.lr {
  display: flex;
  flex-direction: column;
  width: 17px;
  color: #444;
  line-height: 23px;
}
.scale-box {
  display: grid;
  align-items: center;
}
.scale-box > * {
  grid-area: 1 / 1;
}
.scale text {
  fill: #222;
  font-size: 18px;
}
.tip {
  z-index: 1;
  margin-left: 244px;
  margin-top: 2px;
  justify-self: start;
  width: 204px;
  border: 2px solid #777;
  background: #fff;
  color: #333;
  line-height: 22px;
  text-align: center;
  white-space: nowrap;
}
.end-lines {
  width: 15px;
  border: 2px solid #b8b8b8;
  border-width: 0 2px;
}
.end-lines::after {
  content: "";
  display: block;
  width: 8px;
  height: 100%;
  border-right: 2px solid #b8b8b8;
}

.mixer {
  width: 548px;
  border-right: 2px solid #aaa;
}
.mic {
  width: 34px;
  height: 34px;
}
.spk {
  width: 24px;
  height: 24px;
}
.mixer .mic {
  margin-left: 6px;
}
.mixer .spk {
  margin-left: 8px;
}
.mixer .slider-box {
  margin-left: 6px;
}
.mixer .spk + .slider-box {
  margin-left: 8px;
}
.edit {
  gap: 25px;
  border-right: 2px solid #999;
}
.edit > .grip {
  margin-right: -25px;
}
.group {
  display: flex;
}

.slider-box {
  width: 143px;
}
.slider-box.wide {
  width: 222px;
}
.slider-box.short {
  width: 172px;
}
.signs {
  display: flex;
  justify-content: space-between;
  height: 9px;
  padding: 0 8px;
  color: #222;
  font-weight: 700;
  line-height: 13px;
}
.signs.lrs {
  color: #666;
  font-size: 16px;
  font-weight: 400;
}
.slider {
  display: grid;
  height: 25px;
}
.slider > * {
  grid-area: 1 / 1;
}
.rail {
  margin: 0 9px;
  --tick: #c2c2c2;
  background:
    linear-gradient(#bdbdbd, #bdbdbd) 0 15px / 100% 2px no-repeat,
    linear-gradient(var(--tick), var(--tick)) 0 6px / 2px 9px no-repeat,
    linear-gradient(var(--tick), var(--tick)) 100% 6px / 2px 9px no-repeat,
    repeating-linear-gradient(to right, var(--tick) 0 2px, transparent 2px 10%) 0 11px / 100% 4px no-repeat;
}
.slider input {
  width: 100%;
  height: 25px;
  margin: 0;
  background: none;
  -webkit-appearance: none;
  appearance: none;
}
.slider input::-webkit-slider-thumb {
  -webkit-appearance: none;
  width: 20px;
  height: 25px;
  background: url("data:image/svg+xml,%3Csvg xmlns='http://www.w3.org/2000/svg' width='20' height='25'%3E%3Cpath d='M5 1H15L19 5V15L10 24L1 15V5Z' fill='%23d9d8ee' stroke='%23555' stroke-width='2'/%3E%3Cpath d='M7 9H13M7 13H13' stroke='%23fff' stroke-width='2'/%3E%3C/svg%3E");
}

.combo {
  display: grid;
  align-items: center;
  height: 39px;
  border: 2px solid #b4b4b4;
  background: #e0e0e0;
  color: #222;
}
.combo > * {
  grid-area: 1 / 1;
}
.combo svg {
  justify-self: end;
  width: 16px;
  height: 10px;
  margin-right: 6px;
  color: #777;
  pointer-events: none;
}
.combo select {
  width: 100%;
  height: 100%;
  padding: 0 0 0 5px;
  border: 0;
  background: none;
  color: inherit;
  font: inherit;
  opacity: 1;
  -webkit-appearance: none;
  appearance: none;
}
.combo.white {
  background: #fff;
  border-color: #888;
}
.combo.dim {
  height: 35px;
  border: 1px solid #c0c0c0;
  background: #cccccc;
  color: #7c7c7c;
  font-family: "Noto Sans", "Open Sans", sans-serif;
}
.combo.dim svg {
  color: #a8a8a8;
}
.combo.dim select {
  padding-left: 4px;
}
.device > .grip {
  margin-right: 2px;
}
.device .mic {
  margin: 0 4px 0 5px;
}
.device .spk {
  margin: 0 9px 0 10px;
}
.host {
  width: 124px;
}
.input {
  width: 188px;
}
.chans {
  width: 129px;
}
.output {
  width: 187px;
}
.end-line {
  width: 8px;
  margin-left: 3px;
  border: 2px solid #b4b4b4;
  border-width: 0 2px;
}

/* time ruler */
.ruler {
  flex: none;
  height: 48px;
  border-bottom: 2px solid #4c4c4c;
}
.ruler text {
  fill: #222;
  font-size: 20px;
  font-weight: 700;
}

/* tracks */
.tracks {
  display: flex;
  flex: 1;
  flex-direction: column;
  min-height: 0;
  overflow: hidden;
  border-left: 2px solid #111;
}
.track {
  display: flex;
  flex: none;
  height: 500px;
}
.track:first-child {
  margin-top: -47px;
}
.band {
  flex: none;
  height: 12px;
  background: linear-gradient(#111 0 3px, #8e9068 3px 4px, #cdd28c 4px 9px, #a4a878 9px 10px, #5c5d4e 10px);
}
.panel {
  display: flex;
  flex-direction: column;
  width: 163px;
  border-right: 2px solid #555;
  background: #f0f0f0;
}
.head {
  display: flex;
  height: 28px;
  padding-top: 2px;
  border-bottom: 2px solid #999;
}
.close {
  display: grid;
  place-items: center;
  width: 26px;
  border-right: 2px solid #888;
}
.name {
  display: flex;
  flex: 1;
  align-items: center;
  justify-content: space-between;
  padding: 0 5px 0 4px;
}
.panel p {
  height: 27px;
  margin: 0;
  padding-left: 5px;
  line-height: 27px;
}
.head + p {
  margin-top: 1px;
}
.mute {
  display: flex;
  height: 28px;
  margin: 2px 0 10px;
  border-top: 2px solid #ccc;
  border-bottom: 2px solid #999;
}
.mute button {
  flex: 1;
  padding-right: 4px;
}
.mute button + button {
  border-left: 2px solid #999;
}
.panel .slider-box {
  margin: 0 0 16px 9px;
}
.fold {
  display: grid;
  place-items: center;
  width: 105px;
  height: 30px;
  margin: auto 0 1px 31px;
  border: 2px solid #c0c0c0;
  border-bottom: 0;
}
.selected .fold {
  visibility: hidden;
}
.channels {
  display: flex;
  flex: 1;
  flex-direction: column;
  gap: 12px;
  min-width: 0;
  background: linear-gradient(#555 0 2px, #9c9c9c 2px 10px, #555 10px) 52px 244px / 100% 12px no-repeat, #f2f2f2;
}
.channel {
  display: flex;
  height: 244px;
  overflow: hidden;
}
.vruler {
  display: flex;
  flex: none;
  flex-direction: column;
  width: 52px;
  border-bottom: 1px solid #aaa;
  background: #f2f2f2;
  color: #444;
  font-size: 20px;
  text-align: right;
}
.vruler span {
  display: block;
  height: 60px;
  padding-right: 9px;
  line-height: 60px;
  background: linear-gradient(#555, #555) 100% 50% / 4px 2px no-repeat;
}
.vruler span:first-child,
.vruler span:last-child {
  height: 26px;
  line-height: 26px;
  background: none;
}
.vruler span:last-child {
  margin-top: auto;
  background: linear-gradient(#333, #333) 100% 100% / 6px 2px no-repeat;
}
.vruler span:first-child {
  margin-bottom: 7px;
}
.vruler .strong {
  color: #1c1c1c;
  font-weight: 700;
}
.wave {
  flex: 1;
  width: 0;
  background: #c0c0c0;
}
.selected .panel {
  background: #c4c7d6;
}
.selected .rail {
  --tick: #f4f4f8;
}
.selected .vruler {
  background: #c4c7d6;
}
.selected .channels {
  background-color: #c4c7d6;
}
.selected .wave {
  background: #d6d6d6;
  box-shadow: inset 2px 0 #555;
}
.selected .mute {
  border-top-color: #aaa;
}
.selected .channel + .channel .vruler {
  box-shadow: inset 0 2px #f4f4f8;
}

/* scrollbar */
.hscroll {
  display: flex;
  flex: none;
  height: 33px;
  padding: 3px 0 3px 224px;
  border-bottom: 2px solid #c8c8c8;
}
.hscroll button {
  display: grid;
  place-items: center;
  width: 30px;
}
.lane {
  flex: 1;
}
.thumb {
  display: block;
  width: 83%;
  height: 100%;
  background: #cacaca;
}

/* selection toolbar */
.selection {
  display: flex;
  flex: none;
  gap: 11px;
  height: 94px;
  border-bottom: 2px solid #c4c4c4;
  font-size: 21px;
}
.selection > .grip {
  margin-right: -9px;
}
.field {
  display: flex;
  flex-direction: column;
  padding-top: 10px;
}
.field > label,
.caption {
  height: 24px;
  margin-bottom: 5px;
  line-height: 24px;
  white-space: nowrap;
}
.rate {
  width: 136px;
}
.snap {
  width: 146px;
}
.rate select {
  padding-left: 8px;
}
.sep {
  width: 2px;
  height: 42px;
  margin-top: 37px;
  background: #bdbdbd;
}
.sep + .snap {
  margin-left: -2px;
}
.time {
  width: 256px;
}
.radios {
  display: flex;
  gap: 14px;
}
.radios label {
  display: flex;
  align-items: center;
  gap: 5px;
}
.radios input {
  width: 22px;
  height: 22px;
  margin: 0;
  border: 2px solid #777;
  border-radius: 50%;
  background: #fff;
  -webkit-appearance: none;
  appearance: none;
}
.radios input:checked {
  background: radial-gradient(#333 0 6px, #fff 7px);
}
.clock {
  display: flex;
  width: 256px;
  height: 36px;
  padding-left: 3px;
  border: 2px solid #eee;
  border-top-color: #888;
  border-left-color: #888;
  background: #c0c0c0;
  color: #333;
  line-height: 35px;
  text-align: center;
}
.clock span {
  flex: none;
  width: 26px;
}
.clock .digit {
  width: 17px;
  color: #3c30b0;
  font-family: "Noto Sans", sans-serif;
  font-size: 20px;
  font-weight: 600;
}
.clock .m {
  width: 31px;
}
.clock .dot {
  width: 7px;
  font-weight: 700;
}
.clock .s {
  flex: 1;
  width: auto;
  padding-left: 6px;
}
.clock button {
  display: grid;
  place-items: center;
  width: 15px;
  background: #dadada;
}
.watermark {
  display: flex;
  flex-direction: column;
  width: 105px;
  margin-left: auto;
  overflow: hidden;
  color: #bdbdbd;
  font-family: "Open Sans", "Noto Sans", sans-serif;
  font-size: 24px;
  line-height: 36px;
  white-space: nowrap;
}
.watermark strong {
  font-size: 32px;
  font-weight: 400;
  line-height: 40px;
}

.status {
  display: flex;
  flex: none;
  justify-content: flex-end;
  height: 40px;
  border-bottom: 3px solid #111;
  font-family: "Noto Sans", "Open Sans", sans-serif;
  font-weight: 500;
}
.status span {
  width: 149px;
  margin-top: 2px;
  padding-left: 7px;
  border-left: 2px solid #ccc;
  overflow: hidden;
  line-height: 38px;
  white-space: nowrap;
}
</style>
